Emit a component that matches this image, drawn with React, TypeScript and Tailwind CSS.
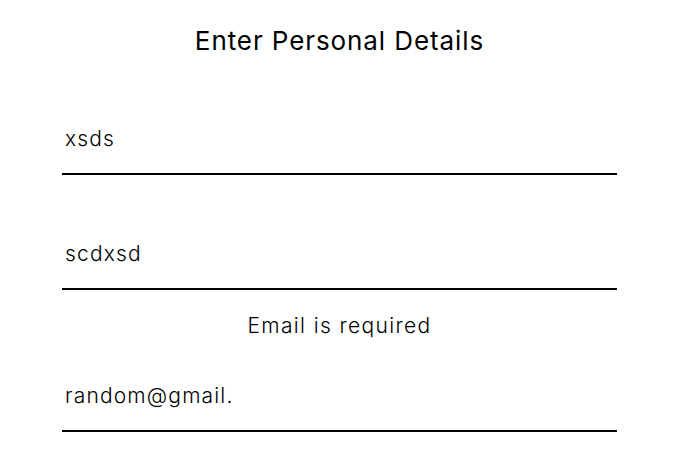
export default function App() {
  return (
    <div className="min-h-screen bg-white text-black" style={{ fontFamily: "Inter, 'Noto Sans', sans-serif" }}>
      <form className="ml-[62px] w-[555px] pt-[26px]">
        <h1 className="text-center text-[26px] leading-[30px] font-normal tracking-[0.035em]">Enter Personal Details</h1>

        <div className="mt-[71px]">
          <input
            defaultValue="xsds"
            className="w-full border-b-2 border-black pb-[22px] pl-[3px] text-[21px] leading-[24px] font-light tracking-[0.055em] text-black outline-none"
          />
        </div>

        <div className="mt-[67px]">
          <input
            defaultValue="scdxsd"
            className="w-full border-b-2 border-black pb-[22px] pl-[3px] text-[21px] leading-[24px] font-light tracking-[0.055em] text-black outline-none"
          />
        </div>
        <p className="mt-[24px] text-center text-[21px] leading-[24px] font-light tracking-[0.065em]">Email is required</p>

        <div className="mt-[46px]">
          <input
            defaultValue="random@gmail."
            className="w-full border-b-2 border-black pb-[22px] pl-[3px] text-[21px] leading-[24px] font-light tracking-[0.055em] text-black outline-none"
          />
        </div>
      </form>
    </div>
  );
}
